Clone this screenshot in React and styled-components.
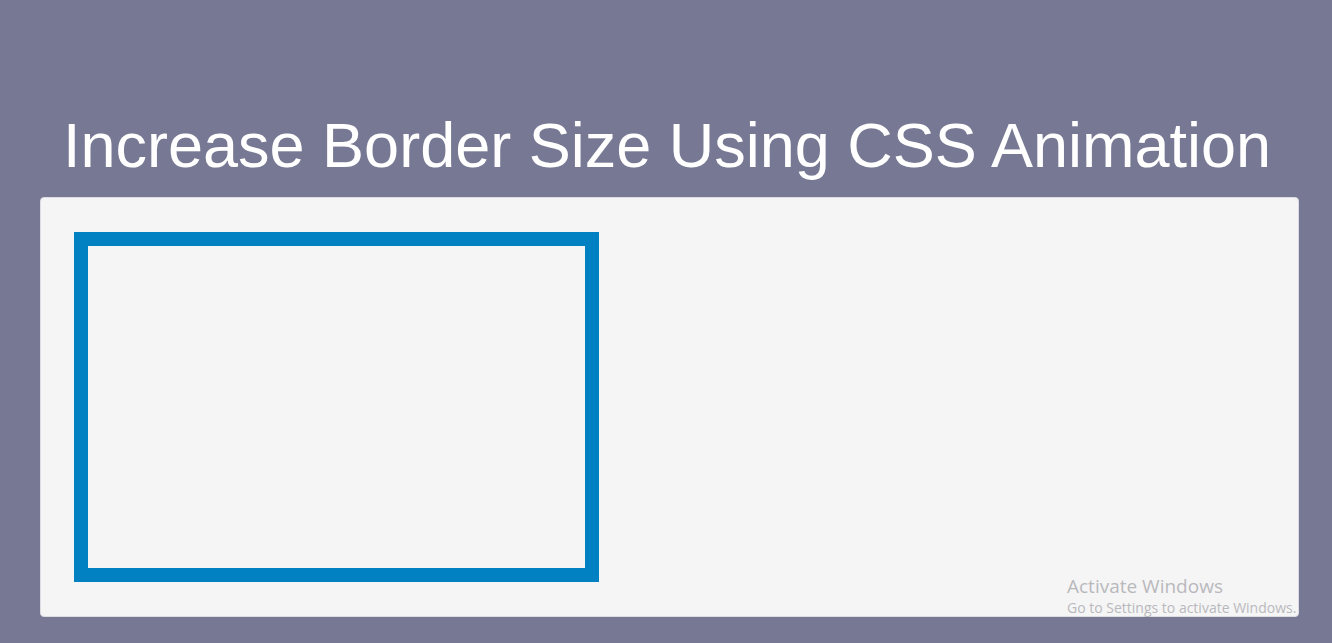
import styled, { createGlobalStyle } from "styled-components";

const GlobalStyle = createGlobalStyle`
  html, body {
    margin: 0;
    padding: 0;
    background: #777893;
    font-family: "Liberation Sans", Arial, sans-serif;
  }
`;

const Page = styled.div`
  position: relative;
  height: 643px;
  box-sizing: border-box;
  padding: 109px 33px 0 40px;
  overflow: hidden;
`;

const Title = styled.h1`
  margin: 0 0 16px;
  font-size: 63px;
  font-weight: 400;
  line-height: 72px;
  color: #ffffff;
  text-align: center;
  padding-right: 5px;
`;

const Card = styled.div`
  height: 420px;
  box-sizing: border-box;
  background: #f5f5f5;
  border: 1px solid #dcdce2;
  border-radius: 4px;
  padding: 34px 33px;
`;

const AnimatedBox = styled.div`
  width: 525px;
  height: 350px;
  box-sizing: border-box;
  border: 14px solid #0180c2;
`;

const Watermark = styled.div`
  position: absolute;
  left: 1067px;
  top: 574px;
  font-family: "Open Sans", "Noto Sans", sans-serif;
  color: #b9b9bd;
  pointer-events: none;
  white-space: nowrap;
`;

const WatermarkTitle = styled.div`
  font-size: 19px;
  line-height: 24px;
`;

const WatermarkHint = styled.div`
  font-size: 14px;
  line-height: 20px;
`;

export default function App() {
  return (
    <>
      <GlobalStyle />
      <Page>
        <Title>Increase Border Size Using CSS Animation</Title>
        <Card>
          <AnimatedBox />
        </Card>
        <Watermark>
          <WatermarkTitle>Activate Windows</WatermarkTitle>
          <WatermarkHint>Go to Settings to activate Windows.</WatermarkHint>
        </Watermark>
      </Page>
    </>
  );
}
